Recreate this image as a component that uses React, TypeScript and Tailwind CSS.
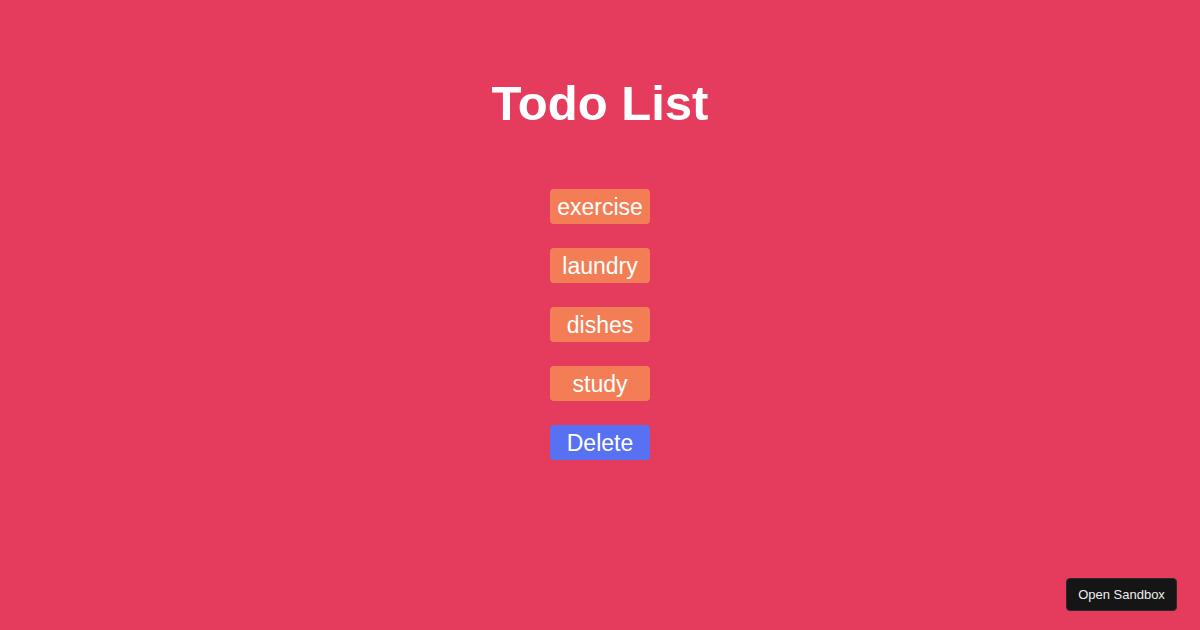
import React from "react";

const todos = ["exercise", "laundry", "dishes", "study"];

export default function App() {
  return (
    <div
      className="relative w-full min-h-[630px] bg-[#e53b5d] flex flex-col items-center"
      style={{ fontFamily: '"Liberation Sans", Arial, sans-serif' }}
    >
      {/* Title */}
      <h1 className="pt-[79px] text-[49px] leading-[48px] font-bold text-white">Todo List</h1>

      {/* Items */}
      <div className="mt-[62px] flex flex-col items-center gap-[24px]">
        {todos.map((todo) => (
          <button
            key={todo}
            className="w-[100px] h-[35px] flex items-center justify-center pt-[2px] rounded-[4px] bg-[#f37e56] text-white text-[23px] leading-none"
          >
            {todo}
          </button>
        ))}
        <button className="w-[100px] h-[35px] flex items-center justify-center pt-[2px] rounded-[4px] bg-[#5870f2] text-white text-[23px] leading-none">
          Delete
        </button>
      </div>

      {/* Sandbox badge */}
      <button className="absolute right-[23px] bottom-[19px] w-[111px] h-[33px] flex items-center justify-center rounded-[4px] bg-[#151515] border border-[#2a2a2a] text-[#eeeeee] text-[13px]">
        Open Sandbox
      </button>
    </div>
  );
}
